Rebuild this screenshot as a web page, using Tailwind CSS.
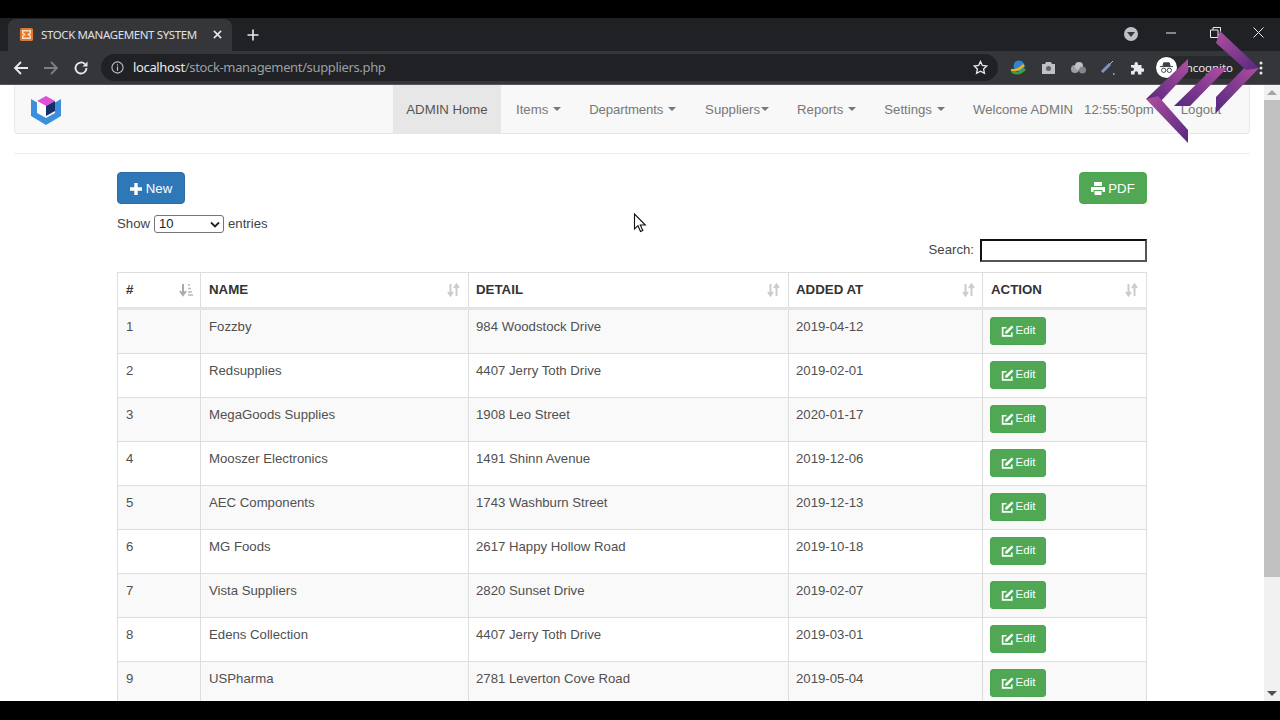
<!DOCTYPE html>
<html><head><meta charset="utf-8"><script src="https://cdn.jsdelivr.net/npm/@tailwindcss/browser@4"></script></head>
<body class="bg-black overflow-hidden font-['Liberation_Sans',sans-serif]">
<div class="relative w-[1280px] h-[720px] overflow-hidden bg-black flex flex-col">
  <div class="h-[18px] shrink-0"></div>
  <!-- tab strip -->
  <div class="h-[33px] shrink-0 bg-[#202124] flex items-end pl-[8px] text-[#e8eaed]">
    <div class="w-[224px] h-[32px] bg-[#35363a] rounded-t-[8px] flex items-center pl-[11px] pr-[10px] pb-[1px]">
      <svg class="w-[15px] h-[15px] shrink-0" viewBox="0 0 16 16"><rect x="1" y="1" width="14" height="14" rx="2" fill="#e2772e"/><path d="M4 4h8v2.500l-2 1.500 2 1.500V12H4V9.500l2-1.500-2-1.500z" fill="none" stroke="#f8dcc0" stroke-width="1.600"/></svg>
      <span class="ml-[7px] text-[11.500px] tracking-[-0.38px] whitespace-nowrap font-['Noto_Sans',sans-serif] text-[#dfe1e5] flex-1">STOCK MANAGEMENT SYSTEM</span>
      <svg class="w-[9px] h-[9px]" viewBox="0 0 10 10"><path d="M1 1l8 8M9 1l-8 8" stroke="#e8eaed" stroke-width="1.700"/></svg>
    </div>
    <svg class="w-[12px] h-[12px] ml-[15px] mb-[10px]" viewBox="0 0 12 12"><path d="M6 0.500v11M0.500 6h11" stroke="#e8eaed" stroke-width="1.600"/></svg>
    <div class="ml-auto flex items-center h-full pb-[4px]">
      <div class="w-[14px] h-[14px] rounded-full bg-[#bdc1c6] flex items-center justify-center mr-[28px] mt-[3px]"><div class="w-0 h-0 border-x-[4px] border-x-transparent border-t-[5px] border-t-[#35363a] mt-[1px]"></div></div>
      <svg class="w-[10px] h-[10px] mr-[34px]" viewBox="0 0 10 10"><path d="M0 5h10" stroke="#e8eaed"/></svg>
      <svg class="w-[11px] h-[11px] mr-[32px]" viewBox="0 0 11 11"><path d="M0.500 3h7.500v7.500H0.500zM3 3V0.500h7.500V8H8" fill="none" stroke="#e8eaed"/></svg>
      <svg class="w-[11px] h-[11px] mr-[16px]" viewBox="0 0 11 11"><path d="M0.500 0.500l10 10M10.500 0.500l-10 10" stroke="#e8eaed"/></svg>
    </div>
  </div>
  <!-- toolbar -->
  <div class="h-[34px] shrink-0 bg-[#35363a] border-b border-[#55565a] flex items-center pl-[13px] text-[#e8eaed]">
    <svg class="w-[16px] h-[16px]" viewBox="0 0 16 16"><path d="M15 8H2M8 2L2 8l6 6" fill="none" stroke="#e8eaed" stroke-width="1.800"/></svg>
    <svg class="w-[16px] h-[16px] ml-[14px]" viewBox="0 0 16 16"><path d="M1 8h13M8 2l6 6-6 6" fill="none" stroke="#7d7f83" stroke-width="1.800"/></svg>
    <svg class="w-[16px] h-[16px] ml-[14px]" viewBox="0 0 16 16"><path d="M13.500 8a5.500 5.500 0 1 1-1.600-3.900" fill="none" stroke="#e8eaed" stroke-width="1.800"/><path d="M14.500 1.500v5h-5z" fill="#e8eaed"/></svg>
    <div class="ml-[12px] w-[897px] h-[27px] rounded-full bg-[#202124] flex items-center pl-[10px] pr-[10px] text-[13px]">
      <svg class="w-[13px] h-[13px] shrink-0" viewBox="0 0 14 14"><circle cx="7" cy="7" r="6" fill="none" stroke="#bdc1c6" stroke-width="1.200"/><path d="M7 6v4.500M7 3.500v1.400" stroke="#bdc1c6" stroke-width="1.300"/></svg>
      <span class="ml-[9px] text-[13px] text-[#e8eaed] font-['Noto_Sans',sans-serif] tracking-[-0.35px]">localhost<span class="text-[#9aa0a6]">/stock-management/suppliers.php</span></span>
      <svg class="w-[15px] h-[15px] ml-auto" viewBox="0 0 16 16"><path d="M8 1.500l2 4.300 4.700.6-3.400 3.200.9 4.600L8 11.900l-4.200 2.300.9-4.600L1.300 6.400 6 5.800z" fill="none" stroke="#e8eaed" stroke-width="1.400"/></svg>
    </div>
    <svg class="w-[16px] h-[16px] ml-[12px]" viewBox="0 0 16 16"><circle cx="9" cy="6" r="5.500" fill="#2f86d0"/><path d="M1 10c4 1 9-1 13-5" stroke="#e8b11c" stroke-width="2.500" fill="none"/><path d="M2 12c4 2 9 1 13-3" stroke="#3f9f3f" stroke-width="2.500" fill="none"/></svg>
    <svg class="w-[15px] h-[14px] ml-[15px]" viewBox="0 0 15 14"><path d="M1 3h3l1-2h5l1 2h3v10H1z" fill="#bdc1c6"/><circle cx="7.500" cy="7.500" r="2.500" fill="#5f6368"/></svg>
    <svg class="w-[17px] h-[14px] ml-[14px]" viewBox="0 0 17 14"><circle cx="5" cy="8" r="4" fill="#9aa0a6"/><circle cx="9" cy="5" r="4" fill="#bdc1c6"/><circle cx="12.500" cy="9" r="3.500" fill="#80868b"/></svg>
    <svg class="w-[15px] h-[15px] ml-[13px]" viewBox="0 0 15 15"><path d="M2 12L10 4" stroke="#7f93c9" stroke-width="3"/><path d="M10 4l3-3" stroke="#b8bbc0" stroke-width="1"/><path d="M13 14h1.500" stroke="#fff"/></svg>
    <svg class="w-[14px] h-[14px] ml-[15px]" viewBox="0 0 14 14"><path d="M1 4h3.500V2.800a1.700 1.700 0 0 1 3.400 0V4H11.500v3.200h1a1.800 1.800 0 0 1 0 3.600h-1V13.500H8V12a1.700 1.700 0 0 0-3.400 0v1.500H1V10h1.200a1.800 1.800 0 0 0 0-3.600H1z" fill="#e8eaed"/></svg>
    <div class="ml-[12px] w-[88px] h-[23px] rounded-full bg-[#28292c] flex items-center">
      <div class="w-[21px] h-[21px] rounded-full bg-white flex items-center justify-center shrink-0"><svg class="w-[15px] h-[15px]" viewBox="0 0 16 16"><path d="M1 7h14M4 7l1-4h6l1 4" fill="#3c4043" stroke="#3c4043"/><circle cx="5" cy="11" r="2.300" fill="none" stroke="#3c4043"/><circle cx="11" cy="11" r="2.300" fill="none" stroke="#3c4043"/></svg></div>
      <span class="ml-[5px] text-[11.500px] text-[#e8eaed] font-['Noto_Sans',sans-serif] tracking-[-0.1px]">Incognito</span>
    </div>
    <svg class="relative z-10 w-[4px] h-[14px] ml-[15px]" viewBox="0 0 4 14"><circle cx="2" cy="2" r="1.500" fill="#e8eaed"/><circle cx="2" cy="7" r="1.500" fill="#e8eaed"/><circle cx="2" cy="12" r="1.500" fill="#e8eaed"/></svg>
  </div>
  <!-- page -->
  <div class="h-[616px] shrink-0 bg-white flex overflow-hidden text-[13.200px] text-[#333]">
    <div class="w-[1264px] shrink-0 overflow-hidden">
      <div class="mx-[14px] h-[49px] bg-[#f8f8f8] border border-t-0 border-[#e7e7e7] rounded-b-[4px] flex items-center text-[#777]">
        <svg class="ml-[15px] w-[32px] h-[32px] shrink-0" viewBox="0 0 32 32"><path d="M1 6l6 3.500V20l9 5 9-5V9.500L31 6v17l-15 9L1 23z" fill="#3d8fdd"/><path d="M16 3l9 5-9 5-9-5z" fill="#e14fd8"/><path d="M7 8l9 5v10l-9-5z" fill="#fff"/><path d="M25 8l-9 5v10l9-5z" fill="#14306b"/></svg>
        <div class="ml-[331px] h-full flex items-center whitespace-nowrap">
          <span class="w-[108px] h-full bg-[#e7e7e7] text-[#555] flex items-center justify-center pt-[1px]">ADMIN Home</span>
          <span class="ml-[15px] pt-[1px]">Items</span><i class="ml-[5px] w-0 h-0 border-x-[4px] border-x-transparent border-t-[4px] border-t-[#777]"></i>
          <span class="ml-[28px] pt-[1px] tracking-[-0.15px]">Departments</span><i class="ml-[5px] w-0 h-0 border-x-[4px] border-x-transparent border-t-[4px] border-t-[#777]"></i>
          <span class="ml-[29px] pt-[1px]">Suppliers</span><i class="ml-[1px] w-0 h-0 border-x-[4px] border-x-transparent border-t-[4px] border-t-[#777]"></i>
          <span class="ml-[28px] pt-[1px]">Reports</span><i class="ml-[5px] w-0 h-0 border-x-[4px] border-x-transparent border-t-[4px] border-t-[#777]"></i>
          <span class="ml-[28px] pt-[1px]">Settings</span><i class="ml-[5px] w-0 h-0 border-x-[4px] border-x-transparent border-t-[4px] border-t-[#777]"></i>
          <span class="ml-[28px] pt-[1px]">Welcome ADMIN</span>
          <span class="ml-[11px] pt-[1px]">12:55:50pm</span>
          <span class="ml-[27px] pt-[1px]">Logout</span>
        </div>
      </div>
      <div class="mx-[14px] mt-[19px] border-t border-[#eee]"></div>
      <div class="mx-[117px] w-[1030px]">
        <div class="mt-[18px] flex justify-between">
          <div class="w-[68px] h-[32px] pt-[1px] bg-[#2e78b8] border border-[#2e6da4] rounded-[4px] text-white flex items-center justify-center gap-[4px]">
            <svg class="w-[12px] h-[12px]" viewBox="0 0 12 12"><path d="M6 0v12M0 6h12" stroke="#fff" stroke-width="3.400"/></svg>New
          </div>
          <div class="w-[68px] h-[32px] pt-[1px] bg-[#50a855] border border-[#4ba650] rounded-[4px] text-white flex items-center justify-center gap-[3px]">
            <svg class="w-[14px] h-[13px]" viewBox="0 0 14 13"><path d="M3 0h8v4H3zM0 5h14v5h-2.500V8h-9v2H0zM3.500 9h7v4h-7z" fill="#fff"/></svg>PDF
          </div>
        </div>
        <div class="mt-[10px] h-[20px] flex items-center text-[#444]">Show
          <div class="ml-[4px] w-[70px] h-[18px] border border-[#767676] rounded-[3px] bg-white flex items-center pl-[4px] text-[#222] text-[13px]">10
            <svg class="ml-auto mr-[3px] w-[10px] h-[7px]" viewBox="0 0 10 7"><path d="M1 1.500l4 4 4-4" fill="none" stroke="#222" stroke-width="1.800"/></svg>
          </div>
          <span class="ml-[4px]">entries</span>
        </div>
        <div class="mt-[4px] h-[24px] flex items-center justify-end text-[#444]">Search:
          <div class="ml-[6px] w-[167px] h-[23px] bg-white border-2 border-t-[#111] border-l-[#111] border-r-[#555] border-b-[#555]"></div>
        </div>
        <div class="mt-[10px] border border-b-0 border-[#ddd] text-[#505050]">
          <div class="h-[34px] border-b-[3px] border-[#e4e4e4] grid grid-cols-[82px_268px_320px_194px_1fr] font-bold text-[#333] text-[13.300px] box-content">
            <div class="pl-[8px] pr-[7px] flex items-center">#<svg class="ml-auto w-[14px] h-[14px]" viewBox="0 0 14 14"><path d="M4 1v10M1 8l3 4 3-4" fill="none" stroke="#aaa" stroke-width="2"/><path d="M9 2h2M9 5.500h3M9 9h4M9 12h5" stroke="#bbb" stroke-width="1.700"/></svg></div>
            <div class="pl-[8px] pr-[8px] border-l border-[#ddd] flex items-center">NAME<svg class="ml-auto w-[13px] h-[14px]" viewBox="0 0 13 14"><path d="M3.500 1v11M1 9l2.500 3.500L6 9M9.500 13V2M7 5l2.500-3.500L12 5" fill="none" stroke="#ccc" stroke-width="2"/></svg></div>
            <div class="pl-[7px] pr-[8px] border-l border-[#ddd] flex items-center">DETAIL<svg class="ml-auto w-[13px] h-[14px]" viewBox="0 0 13 14"><path d="M3.500 1v11M1 9l2.500 3.500L6 9M9.500 13V2M7 5l2.500-3.500L12 5" fill="none" stroke="#ccc" stroke-width="2"/></svg></div>
            <div class="pl-[7px] pr-[7px] border-l border-[#ddd] flex items-center">ADDED AT<svg class="ml-auto w-[13px] h-[14px]" viewBox="0 0 13 14"><path d="M3.500 1v11M1 9l2.500 3.500L6 9M9.500 13V2M7 5l2.500-3.500L12 5" fill="none" stroke="#ccc" stroke-width="2"/></svg></div>
            <div class="pl-[8px] pr-[8px] border-l border-[#ddd] flex items-center">ACTION<svg class="ml-auto w-[13px] h-[14px]" viewBox="0 0 13 14"><path d="M3.500 1v11M1 9l2.500 3.500L6 9M9.500 13V2M7 5l2.500-3.500L12 5" fill="none" stroke="#ccc" stroke-width="2"/></svg></div>
          </div>
          <!-- rows -->
          <div class="h-[44px] bg-[#f9f9f9] border-b border-[#ddd] grid grid-cols-[82px_268px_320px_194px_1fr]"><div class="px-[8px] pt-[7px]">1</div><div class="px-[8px] pt-[7px] border-l border-[#ddd]">Fozzby</div><div class="px-[7px] pt-[7px] border-l border-[#ddd]">984 Woodstock Drive</div><div class="px-[7px] pt-[7px] border-l border-[#ddd]">2019-04-12</div><div class="px-[7px] pt-[7px] border-l border-[#ddd]"><div class="w-[56px] h-[28px] bg-[#50a855] border border-[#4ba650] rounded-[3px] text-white text-[11.500px] flex items-center justify-center gap-[2px]"><svg class="w-[13px] h-[13px]" viewBox="0 0 12 12"><path d="M10 7v3H1.500V2.500H5" fill="none" stroke="#fff" stroke-width="1.500"/><path d="M4 8V6l6-5.500 1.500 1.500L5.500 8z" fill="#fff"/></svg>Edit</div></div></div>
          <div class="h-[44px] bg-white border-b border-[#ddd] grid grid-cols-[82px_268px_320px_194px_1fr]"><div class="px-[8px] pt-[7px]">2</div><div class="px-[8px] pt-[7px] border-l border-[#ddd]">Redsupplies</div><div class="px-[7px] pt-[7px] border-l border-[#ddd]">4407 Jerry Toth Drive</div><div class="px-[7px] pt-[7px] border-l border-[#ddd]">2019-02-01</div><div class="px-[7px] pt-[7px] border-l border-[#ddd]"><div class="w-[56px] h-[28px] bg-[#50a855] border border-[#4ba650] rounded-[3px] text-white text-[11.500px] flex items-center justify-center gap-[2px]"><svg class="w-[13px] h-[13px]" viewBox="0 0 12 12"><path d="M10 7v3H1.500V2.500H5" fill="none" stroke="#fff" stroke-width="1.500"/><path d="M4 8V6l6-5.500 1.500 1.500L5.500 8z" fill="#fff"/></svg>Edit</div></div></div>
          <div class="h-[44px] bg-[#f9f9f9] border-b border-[#ddd] grid grid-cols-[82px_268px_320px_194px_1fr]"><div class="px-[8px] pt-[7px]">3</div><div class="px-[8px] pt-[7px] border-l border-[#ddd]">MegaGoods Supplies</div><div class="px-[7px] pt-[7px] border-l border-[#ddd]">1908 Leo Street</div><div class="px-[7px] pt-[7px] border-l border-[#ddd]">2020-01-17</div><div class="px-[7px] pt-[7px] border-l border-[#ddd]"><div class="w-[56px] h-[28px] bg-[#50a855] border border-[#4ba650] rounded-[3px] text-white text-[11.500px] flex items-center justify-center gap-[2px]"><svg class="w-[13px] h-[13px]" viewBox="0 0 12 12"><path d="M10 7v3H1.500V2.500H5" fill="none" stroke="#fff" stroke-width="1.500"/><path d="M4 8V6l6-5.500 1.500 1.500L5.500 8z" fill="#fff"/></svg>Edit</div></div></div>
          <div class="h-[44px] bg-white border-b border-[#ddd] grid grid-cols-[82px_268px_320px_194px_1fr]"><div class="px-[8px] pt-[7px]">4</div><div class="px-[8px] pt-[7px] border-l border-[#ddd]">Mooszer Electronics</div><div class="px-[7px] pt-[7px] border-l border-[#ddd]">1491 Shinn Avenue</div><div class="px-[7px] pt-[7px] border-l border-[#ddd]">2019-12-06</div><div class="px-[7px] pt-[7px] border-l border-[#ddd]"><div class="w-[56px] h-[28px] bg-[#50a855] border border-[#4ba650] rounded-[3px] text-white text-[11.500px] flex items-center justify-center gap-[2px]"><svg class="w-[13px] h-[13px]" viewBox="0 0 12 12"><path d="M10 7v3H1.500V2.500H5" fill="none" stroke="#fff" stroke-width="1.500"/><path d="M4 8V6l6-5.500 1.500 1.500L5.500 8z" fill="#fff"/></svg>Edit</div></div></div>
          <div class="h-[44px] bg-[#f9f9f9] border-b border-[#ddd] grid grid-cols-[82px_268px_320px_194px_1fr]"><div class="px-[8px] pt-[7px]">5</div><div class="px-[8px] pt-[7px] border-l border-[#ddd]">AEC Components</div><div class="px-[7px] pt-[7px] border-l border-[#ddd]">1743 Washburn Street</div><div class="px-[7px] pt-[7px] border-l border-[#ddd]">2019-12-13</div><div class="px-[7px] pt-[7px] border-l border-[#ddd]"><div class="w-[56px] h-[28px] bg-[#50a855] border border-[#4ba650] rounded-[3px] text-white text-[11.500px] flex items-center justify-center gap-[2px]"><svg class="w-[13px] h-[13px]" viewBox="0 0 12 12"><path d="M10 7v3H1.500V2.500H5" fill="none" stroke="#fff" stroke-width="1.500"/><path d="M4 8V6l6-5.500 1.500 1.500L5.500 8z" fill="#fff"/></svg>Edit</div></div></div>
          <div class="h-[44px] bg-white border-b border-[#ddd] grid grid-cols-[82px_268px_320px_194px_1fr]"><div class="px-[8px] pt-[7px]">6</div><div class="px-[8px] pt-[7px] border-l border-[#ddd]">MG Foods</div><div class="px-[7px] pt-[7px] border-l border-[#ddd]">2617 Happy Hollow Road</div><div class="px-[7px] pt-[7px] border-l border-[#ddd]">2019-10-18</div><div class="px-[7px] pt-[7px] border-l border-[#ddd]"><div class="w-[56px] h-[28px] bg-[#50a855] border border-[#4ba650] rounded-[3px] text-white text-[11.500px] flex items-center justify-center gap-[2px]"><svg class="w-[13px] h-[13px]" viewBox="0 0 12 12"><path d="M10 7v3H1.500V2.500H5" fill="none" stroke="#fff" stroke-width="1.500"/><path d="M4 8V6l6-5.500 1.500 1.500L5.500 8z" fill="#fff"/></svg>Edit</div></div></div>
          <div class="h-[44px] bg-[#f9f9f9] border-b border-[#ddd] grid grid-cols-[82px_268px_320px_194px_1fr]"><div class="px-[8px] pt-[7px]">7</div><div class="px-[8px] pt-[7px] border-l border-[#ddd]">Vista Suppliers</div><div class="px-[7px] pt-[7px] border-l border-[#ddd]">2820 Sunset Drive</div><div class="px-[7px] pt-[7px] border-l border-[#ddd]">2019-02-07</div><div class="px-[7px] pt-[7px] border-l border-[#ddd]"><div class="w-[56px] h-[28px] bg-[#50a855] border border-[#4ba650] rounded-[3px] text-white text-[11.500px] flex items-center justify-center gap-[2px]"><svg class="w-[13px] h-[13px]" viewBox="0 0 12 12"><path d="M10 7v3H1.500V2.500H5" fill="none" stroke="#fff" stroke-width="1.500"/><path d="M4 8V6l6-5.500 1.500 1.500L5.500 8z" fill="#fff"/></svg>Edit</div></div></div>
          <div class="h-[44px] bg-white border-b border-[#ddd] grid grid-cols-[82px_268px_320px_194px_1fr]"><div class="px-[8px] pt-[7px]">8</div><div class="px-[8px] pt-[7px] border-l border-[#ddd]">Edens Collection</div><div class="px-[7px] pt-[7px] border-l border-[#ddd]">4407 Jerry Toth Drive</div><div class="px-[7px] pt-[7px] border-l border-[#ddd]">2019-03-01</div><div class="px-[7px] pt-[7px] border-l border-[#ddd]"><div class="w-[56px] h-[28px] bg-[#50a855] border border-[#4ba650] rounded-[3px] text-white text-[11.500px] flex items-center justify-center gap-[2px]"><svg class="w-[13px] h-[13px]" viewBox="0 0 12 12"><path d="M10 7v3H1.500V2.500H5" fill="none" stroke="#fff" stroke-width="1.500"/><path d="M4 8V6l6-5.500 1.500 1.500L5.500 8z" fill="#fff"/></svg>Edit</div></div></div>
          <div class="h-[44px] bg-[#f9f9f9] border-b border-[#ddd] grid grid-cols-[82px_268px_320px_194px_1fr]"><div class="px-[8px] pt-[7px]">9</div><div class="px-[8px] pt-[7px] border-l border-[#ddd]">USPharma</div><div class="px-[7px] pt-[7px] border-l border-[#ddd]">2781 Leverton Cove Road</div><div class="px-[7px] pt-[7px] border-l border-[#ddd]">2019-05-04</div><div class="px-[7px] pt-[7px] border-l border-[#ddd]"><div class="w-[56px] h-[28px] bg-[#50a855] border border-[#4ba650] rounded-[3px] text-white text-[11.500px] flex items-center justify-center gap-[2px]"><svg class="w-[13px] h-[13px]" viewBox="0 0 12 12"><path d="M10 7v3H1.500V2.500H5" fill="none" stroke="#fff" stroke-width="1.500"/><path d="M4 8V6l6-5.500 1.500 1.500L5.500 8z" fill="#fff"/></svg>Edit</div></div></div>
        </div>
      </div>
    </div>
    <!-- scrollbar -->
    <div class="w-[16px] shrink-0 bg-[#f1f1f1] flex flex-col items-center">
      <div class="mt-[5px] w-0 h-0 border-x-[5px] border-x-transparent border-b-[5px] border-b-[#a3a3a3]"></div>
      <div class="mt-[5px] w-full h-[477px] bg-[#c1c1c1]"></div>
      <div class="mt-auto mb-[5px] w-0 h-0 border-x-[5px] border-x-transparent border-t-[5px] border-t-[#505050]"></div>
    </div>
  </div>
  <!-- overlays: cursor and channel logo -->
  <svg class="absolute left-[633px] top-[213px] w-[14px] h-[20px]" viewBox="0 0 14 20"><path d="M1.500 1v15l3.500-3.300 2.500 5.800 2.300-1-2.500-5.500h5z" fill="#fff" stroke="#111" stroke-width="1.100"/></svg>
  <svg class="absolute left-[1140px] top-[25px] w-[125px] h-[125px]" viewBox="0 0 125 125">
    <defs>
      <linearGradient id="a" x1="0" y1="0" x2="1" y2="1"><stop offset="0" stop-color="#b04fa0"/><stop offset="1" stop-color="#55287f"/></linearGradient>
      <linearGradient id="b" x1="1" y1="0" x2="0" y2="1"><stop offset="0" stop-color="#b04fa0"/><stop offset="1" stop-color="#55287f"/></linearGradient>
    </defs>
    <path d="M119 43L76 88V72L106 41z" fill="url(#b)"/>
    <path d="M80 6L119 43 106 45 76 18z" fill="url(#a)"/>
    <path d="M87 43H73L34 81H50z" fill="url(#b)"/>
    <path d="M48 34V47L21 76 6 74z" fill="url(#b)"/>
    <path d="M6 74L48 118V105L18 71z" fill="url(#a)"/>
  </svg>
</div>
</body></html>
